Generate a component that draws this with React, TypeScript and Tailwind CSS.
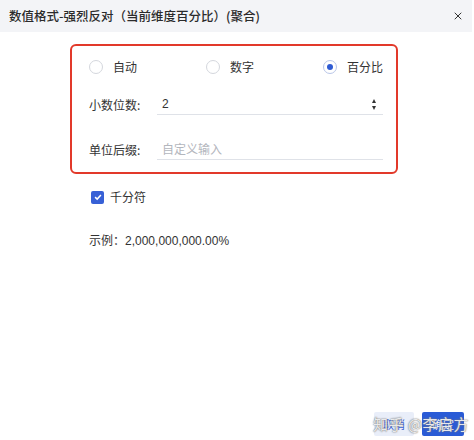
import { X } from "lucide-react";

const FONT = { fontFamily: '"Noto Sans CJK SC", "Noto Sans", sans-serif' };

type RadioProps = { label: string; checked?: boolean };

function Radio({ label, checked }: RadioProps) {
    return (
        <label className="flex items-center gap-[10px]">
            <span
                className={`w-[14px] h-[14px] rounded-full border flex items-center justify-center bg-white ${
                    checked ? "border-[#b9c6e8]" : "border-[#d4d7dd]"
                }`}
            >
                {checked && <span className="w-[6px] h-[6px] rounded-full bg-[#2f5bd3]" />}
            </span>
            <span className="text-[12px] text-[#333]">{label}</span>
        </label>
    );
}

function FieldRow({ label, children }: { label: string; children: React.ReactNode }) {
    return (
        <div className="flex items-start h-[20px]">
            <span className="w-[68px] text-[12px] leading-[20px] text-[#333]">{label}</span>
            <div className="flex-1 h-full flex items-center border-b border-[#dfe2e8] pl-[5px] pb-[1px]">{children}</div>
        </div>
    );
}

export default function App() {
    return (
        <div className="relative w-[474px] h-[440px] bg-white flex flex-col overflow-hidden" style={FONT}>
            {/* header */}
            <div className="h-[32px] mr-[2px] px-[9px] flex items-center justify-between bg-[#f3f4f7]">
                <span className="text-[12.5px] font-medium text-[#2b2b2b]">
                    数值格式-强烈反对（当前维度百分比）(聚合)
                </span>
                <X className="w-[12px] h-[12px] -mr-[1px] text-[#333]" strokeWidth={2} />
            </div>

            <div className="pl-[70px] pt-[12px] flex flex-col">
                {/* options box */}
                <div className="w-[328px] h-[130px] border-[2.5px] border-[#e2392a] rounded-[6px] pl-[17px] pr-[13px] pt-[13px] flex flex-col">
                    <div className="flex items-center justify-between h-[15px]">
                        <Radio label="自动" />
                        <Radio label="数字" />
                        <Radio label="百分比" checked />
                    </div>
                    <div className="mt-[21px]">
                        <FieldRow label="小数位数:">
                            <span className="flex-1 text-[12px] text-[#333]" style={{ fontFamily: '"Liberation Sans", sans-serif' }}>
                                2
                            </span>
                            <span className="flex flex-col items-center gap-[3px] mr-[7px]">
                                <span className="w-0 h-0 border-l-[2.5px] border-r-[2.5px] border-b-[4px] border-l-transparent border-r-transparent border-b-[#333]" />
                                <span className="w-0 h-0 border-l-[2.5px] border-r-[2.5px] border-t-[4px] border-l-transparent border-r-transparent border-t-[#333]" />
                            </span>
                        </FieldRow>
                    </div>
                    <div className="mt-[25px]">
                        <FieldRow label="单位后缀:">
                            <span className="text-[12px] text-[#b3b6bd]">自定义输入</span>
                        </FieldRow>
                    </div>
                </div>

                {/* thousands separator */}
                <div className="flex items-center gap-[6px] mt-[14px] ml-[21px]">
                    <span className="w-[13px] h-[13px] rounded-[2px] bg-[#3760d6] flex items-center justify-center">
                        <svg viewBox="0 0 12 12" className="w-[10px] h-[10px]">
                            <path d="M2.5 6.2 L5 8.5 L9.5 3.5" fill="none" stroke="white" strokeWidth="1.8" />
                        </svg>
                    </span>
                    <span className="text-[12px] text-[#333]">千分符</span>
                </div>

                <div className="mt-[25px] ml-[19px] text-[12px] text-[#333]">
                    示例：<span style={{ fontFamily: '"Liberation Sans", sans-serif' }}>2,000,000,000.00%</span>
                </div>
            </div>

            {/* footer */}
            <div className="mt-auto mb-[4px] mr-[10px] flex justify-end gap-[8px]">
                <button className="w-[40px] h-[24px] rounded-[2px] bg-[#e9eef9] text-[11px] text-[#3760d6]">取消</button>
                <button className="w-[42px] h-[24px] rounded-[2px] bg-[#2a5bd6] text-[11px] text-white">确定</button>
            </div>

            <div
                className="absolute left-[373px] top-[413px] text-[15px] text-white/85 tracking-[0.5px]"
                style={{ textShadow: "0 0 1px #666, 0 0 2px #888" }}
            >
                知乎 @李启方
            </div>
        </div>
    );
}
